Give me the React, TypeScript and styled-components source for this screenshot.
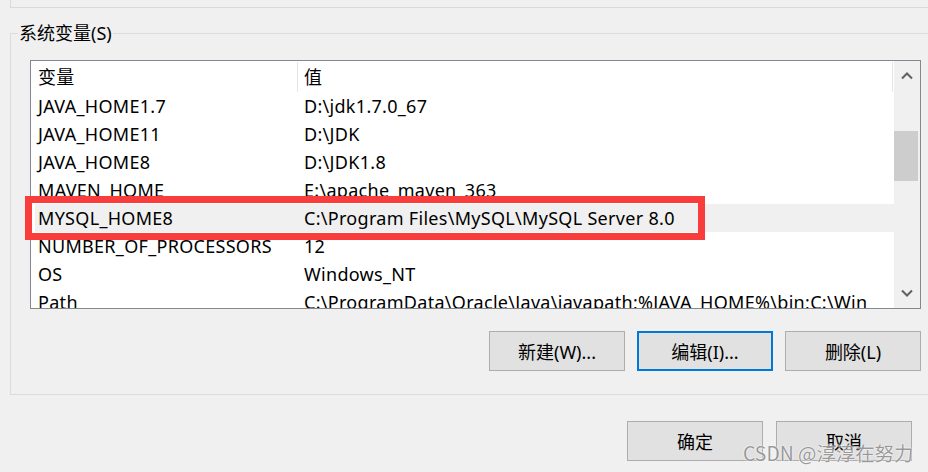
import React from "react";
import styled, { createGlobalStyle } from "styled-components";

const GlobalStyle = createGlobalStyle`
  html, body { margin: 0; padding: 0; background: #f0f0f0; }
  body {
    font-family: "Noto Sans", "Noto Sans CJK SC", sans-serif;
    font-size: 18px;
    color: #000;
  }
  * { box-sizing: border-box; }
`;

const Root = styled.div`
  position: relative;
  width: 928px;
  height: 472px;
  overflow: hidden;
  padding-left: 10px;
  background: #f0f0f0;
`;

const PrevGroup = styled.div`
  height: 8px;
  margin-right: -20px;
  border-left: 1px solid #dadada;
  border-bottom: 1px solid #dadada;
`;

const GroupBox = styled.fieldset`
  margin: 13px -20px 0 0;
  padding: 0 0 23px 0;
  border: 1px solid #dcdcdc;
  min-width: 0;
`;

const Legend = styled.legend`
  margin-left: 7px;
  padding: 0 1px;
  line-height: 24px;
  font-size: 18px;
`;

const GroupContent = styled.div`
  width: 891px;
  margin: 15px 0 0 19px;
`;

const ListView = styled.div`
  display: flex;
  height: 249px;
  border: 1px solid #828790;
  background: #fff;
`;

const Table = styled.div`
  flex: 1;
  overflow: hidden;
  letter-spacing: 0.3px;
`;

const HeaderRow = styled.div`
  display: grid;
  grid-template-columns: 267px 595px;
  height: 31px;
`;

const HeaderCell = styled.div<{ $pad: number }>`
  padding-left: ${(p) => p.$pad}px;
  line-height: 30px;
  border-right: 1px solid #e5e5e5;
  margin: 1px 0 0 0;
`;

const Row = styled.div<{ $selected?: boolean }>`
  display: grid;
  grid-template-columns: 263px 1fr;
  height: 28px;
  margin-left: 4px;
  line-height: 28px;
  white-space: nowrap;
  background: ${(p) => (p.$selected ? "#f0f0f0" : "transparent")};
`;

const Cell = styled.div<{ $pad: number }>`
  padding-left: ${(p) => p.$pad}px;
  padding-right: 20px;
  overflow: hidden;
`;

const ScrollBar = styled.div`
  width: 26px;
  display: flex;
  flex-direction: column;
  background: #f0f0f0;
`;

const ArrowBox = styled.div`
  height: 30px;
  display: flex;
  align-items: center;
  justify-content: center;
  padding-right: 1px;
`;

const Track = styled.div`
  flex: 1;
`;

const Thumb = styled.div<{ $top: number; $size: number }>`
  margin: ${(p) => p.$top}px 2px 0 0;
  height: ${(p) => p.$size}px;
  background: #cdcdcd;
`;

const ButtonRow = styled.div<{ $gap: number }>`
  display: flex;
  justify-content: flex-end;
  gap: ${(p) => p.$gap}px;
`;

const ListButtons = styled(ButtonRow)`
  margin-top: 22px;
`;

const DialogButtons = styled(ButtonRow)`
  margin-top: 26px;
  padding-right: 16px;
`;

const Button = styled.button<{ $primary?: boolean }>`
  width: 136px;
  height: 40px;
  padding: 0;
  font-family: "Noto Sans", "Noto Sans CJK SC", sans-serif;
  font-size: 18px;
  color: #000;
  background: #e1e1e1;
  border: ${(p) => (p.$primary ? "2px solid #0078d7" : "1px solid #adadad")};
  border-radius: 0;
`;

const Highlight = styled.div`
  position: absolute;
  left: 25px;
  top: 196px;
  width: 680px;
  height: 44px;
  border: 7px solid #f93c3c;
  pointer-events: none;
`;

const Watermark = styled.div`
  position: absolute;
  left: 743px;
  top: 441px;
  font-family: "Noto Sans CJK SC", sans-serif;
  font-size: 19.4px;
  line-height: 24px;
  color: rgba(120, 120, 120, 0.75);
  text-shadow: 0 0 1px #fff, 0 0 2px #fff;
  white-space: nowrap;
`;

const Chevron = ({ down }: { down?: boolean }) => (
  <svg width="12" height="8" viewBox="0 0 12 8">
    <polyline
      points={down ? "1,1.5 6,6.5 11,1.5" : "1,6.5 6,1.5 11,6.5"}
      fill="none"
      stroke="#606060"
      strokeWidth="2"
    />
  </svg>
);

const rows: [string, string][] = [
  ["JAVA_HOME1.7", "D:\\jdk1.7.0_67"],
  ["JAVA_HOME11", "D:\\JDK"],
  ["JAVA_HOME8", "D:\\JDK1.8"],
  ["MAVEN_HOME", "E:\\apache_maven_363"],
  ["MYSQL_HOME8", "C:\\Program Files\\MySQL\\MySQL Server 8.0"],
  ["NUMBER_OF_PROCESSORS", "12"],
  ["OS", "Windows_NT"],
  ["Path", "C:\\ProgramData\\Oracle\\Java\\javapath;%JAVA_HOME%\\bin;C:\\Win"],
];

export default function App() {
  return (
    <Root>
      <GlobalStyle />
      <PrevGroup />
      <GroupBox>
        <Legend>系统变量(S)</Legend>
        <GroupContent>
          <ListView>
            <Table>
              <HeaderRow>
                <HeaderCell $pad={7}>变量</HeaderCell>
                <HeaderCell $pad={6}>值</HeaderCell>
              </HeaderRow>
              {rows.map(([k, v]) => (
                <Row key={k} $selected={k === "MYSQL_HOME8"}>
                  <Cell $pad={3}>{k}</Cell>
                  <Cell $pad={6}>{v}</Cell>
                </Row>
              ))}
            </Table>
            <ScrollBar>
              <ArrowBox>
                <Chevron />
              </ArrowBox>
              <Track>
                <Thumb $top={40} $size={50} />
              </Track>
              <ArrowBox>
                <Chevron down />
              </ArrowBox>
            </ScrollBar>
          </ListView>
          <ListButtons $gap={12}>
            <Button>新建(W)...</Button>
            <Button $primary>编辑(I)...</Button>
            <Button>删除(L)</Button>
          </ListButtons>
        </GroupContent>
      </GroupBox>
      <DialogButtons $gap={13}>
        <Button>确定</Button>
        <Button>取消</Button>
      </DialogButtons>
      <Highlight />
      <Watermark>CSDN @淳淳在努力</Watermark>
    </Root>
  );
}
